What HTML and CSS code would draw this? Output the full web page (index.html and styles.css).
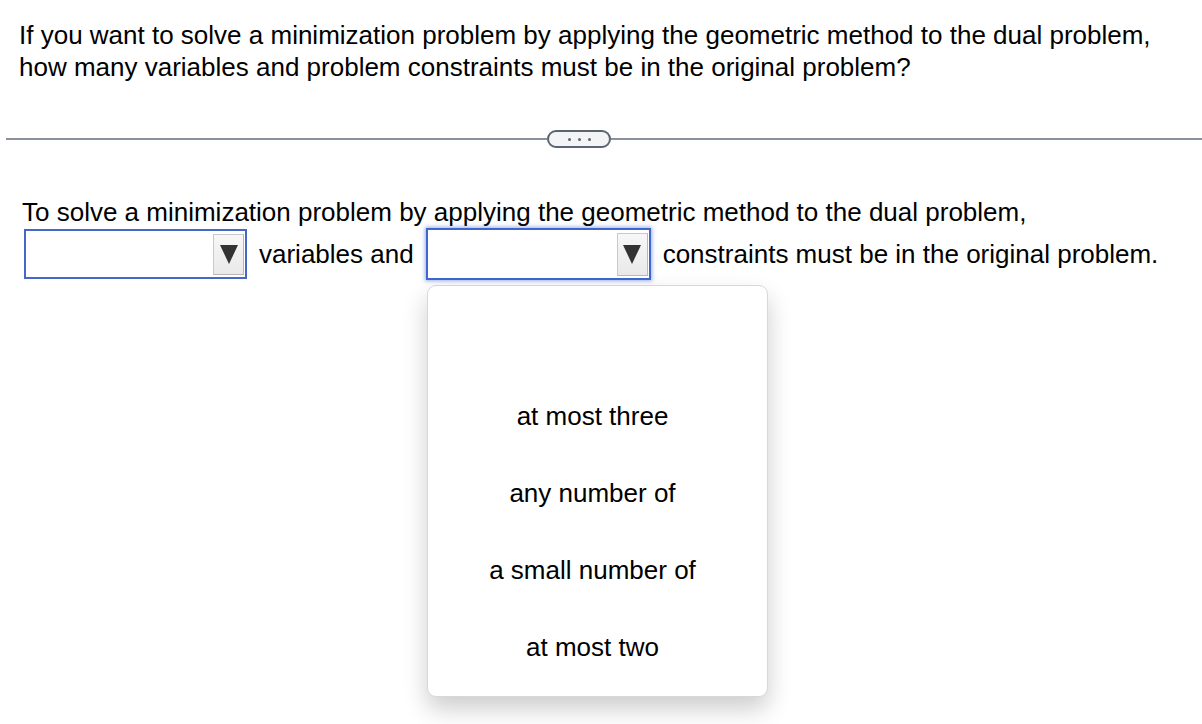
FILE: index.html
```html
<!DOCTYPE html>
<html>
<head>
<meta charset="utf-8">
<link rel="stylesheet" href="styles.css">
</head>
<body>
<div class="page">
<div class="question">
  <p class="q-text">If you want to solve a minimization problem by applying the geometric method to the dual problem, how many variables and problem constraints must be in the original problem?</p>
</div>
<div class="divider">
  <span class="line line-left"></span>
  <button class="more" type="button"><i></i><i></i><i></i></button>
  <span class="line"></span>
</div>
<div class="answer">
  <p class="a-line">To solve a minimization problem by applying the geometric method to the dual problem,</p>
  <div class="a-row">
    <div class="select">
      <span class="arrow-btn"><span class="tri"></span></span>
    </div>
    <span class="word">variables and</span>
    <div class="select focused">
      <span class="arrow-btn"><span class="tri"></span></span>
    </div>
    <span class="word">constraints must be in the original problem.</span>
  </div>
  <div class="menu-wrap">
    <ul class="menu">
      <li class="opt"></li>
      <li class="opt">at most three</li>
      <li class="opt">any number of</li>
      <li class="opt">a small number of</li>
      <li class="opt">at most two</li>
    </ul>
  </div>
</div>
</div>
</body>
</html>
```
FILE: styles.css
```css
* { box-sizing: border-box; }
html, body { margin: 0; padding: 0; background: #fff; }
body {
  font-family: "Liberation Sans", Arial, Helvetica, sans-serif;
  color: #000;
  font-size: 26px;
}
.page { min-height: 724px; }
.question { padding: 19px 20px 0 19px; }
.q-text { margin: 0; line-height: 32px; max-width: 1145px; }

.divider {
  display: flex;
  align-items: center;
  margin-top: 47px;
  padding-left: 6px;
  height: 18px;
}
.divider .line { flex: 1; height: 2px; background: #8a909c; }
.divider .line-left { flex: none; width: 541px; }
.more {
  width: 64px; height: 18px;
  border: 2px solid #5b6472;
  border-radius: 9px;
  background: #f3f4f6;
  display: flex; align-items: center; justify-content: center;
  gap: 7px; padding: 0; margin: 0;
  flex: none;
}
.more i { width: 3px; height: 3px; border-radius: 50%; background: #5b6472; display: block; }

.answer { padding: 48px 20px 0 22px; }
.a-line { margin: 0; line-height: 32px; }
.a-row { display: flex; align-items: center; gap: 12px; margin-left: 2px; }
.word { white-space: nowrap; }
.select {
  position: relative;
  width: 223px; height: 50px;
  border: 2px solid #4568c4;
  background: #fff;
  flex: none;
}
.select.focused {
  width: 225px; height: 52px;
  border-color: #3e66cc;
  box-shadow: 0 0 4px 1px rgba(70, 110, 210, 0.55);
}
.arrow-btn {
  position: absolute;
  right: 1px; top: 3px; bottom: 2px;
  width: 31px;
  background: linear-gradient(#f7f7f7, #e9e9e9);
  border: 1px solid #c9c9c9;
  border-right-color: #b8b8b8;
  border-bottom-color: #b8b8b8;
  display: flex; align-items: center; justify-content: center;
}
.tri {
  width: 0; height: 0;
  border-left: 9px solid transparent;
  border-right: 9px solid transparent;
  border-top: 19px solid #333;
}
.menu-wrap {
  margin-left: 405px;
  margin-top: 5px;
}
.menu {
  width: 341px;
  margin: 0; padding: 15px 10px 10px 0;
  list-style: none;
  background: #fff;
  border: 1px solid #d8d8d8;
  border-radius: 9px;
  box-shadow: 0 12px 24px rgba(0,0,0,0.2);
}
.opt {
  height: 77px;
  display: flex; align-items: center; justify-content: center;
  font-size: 26px;
}
```
